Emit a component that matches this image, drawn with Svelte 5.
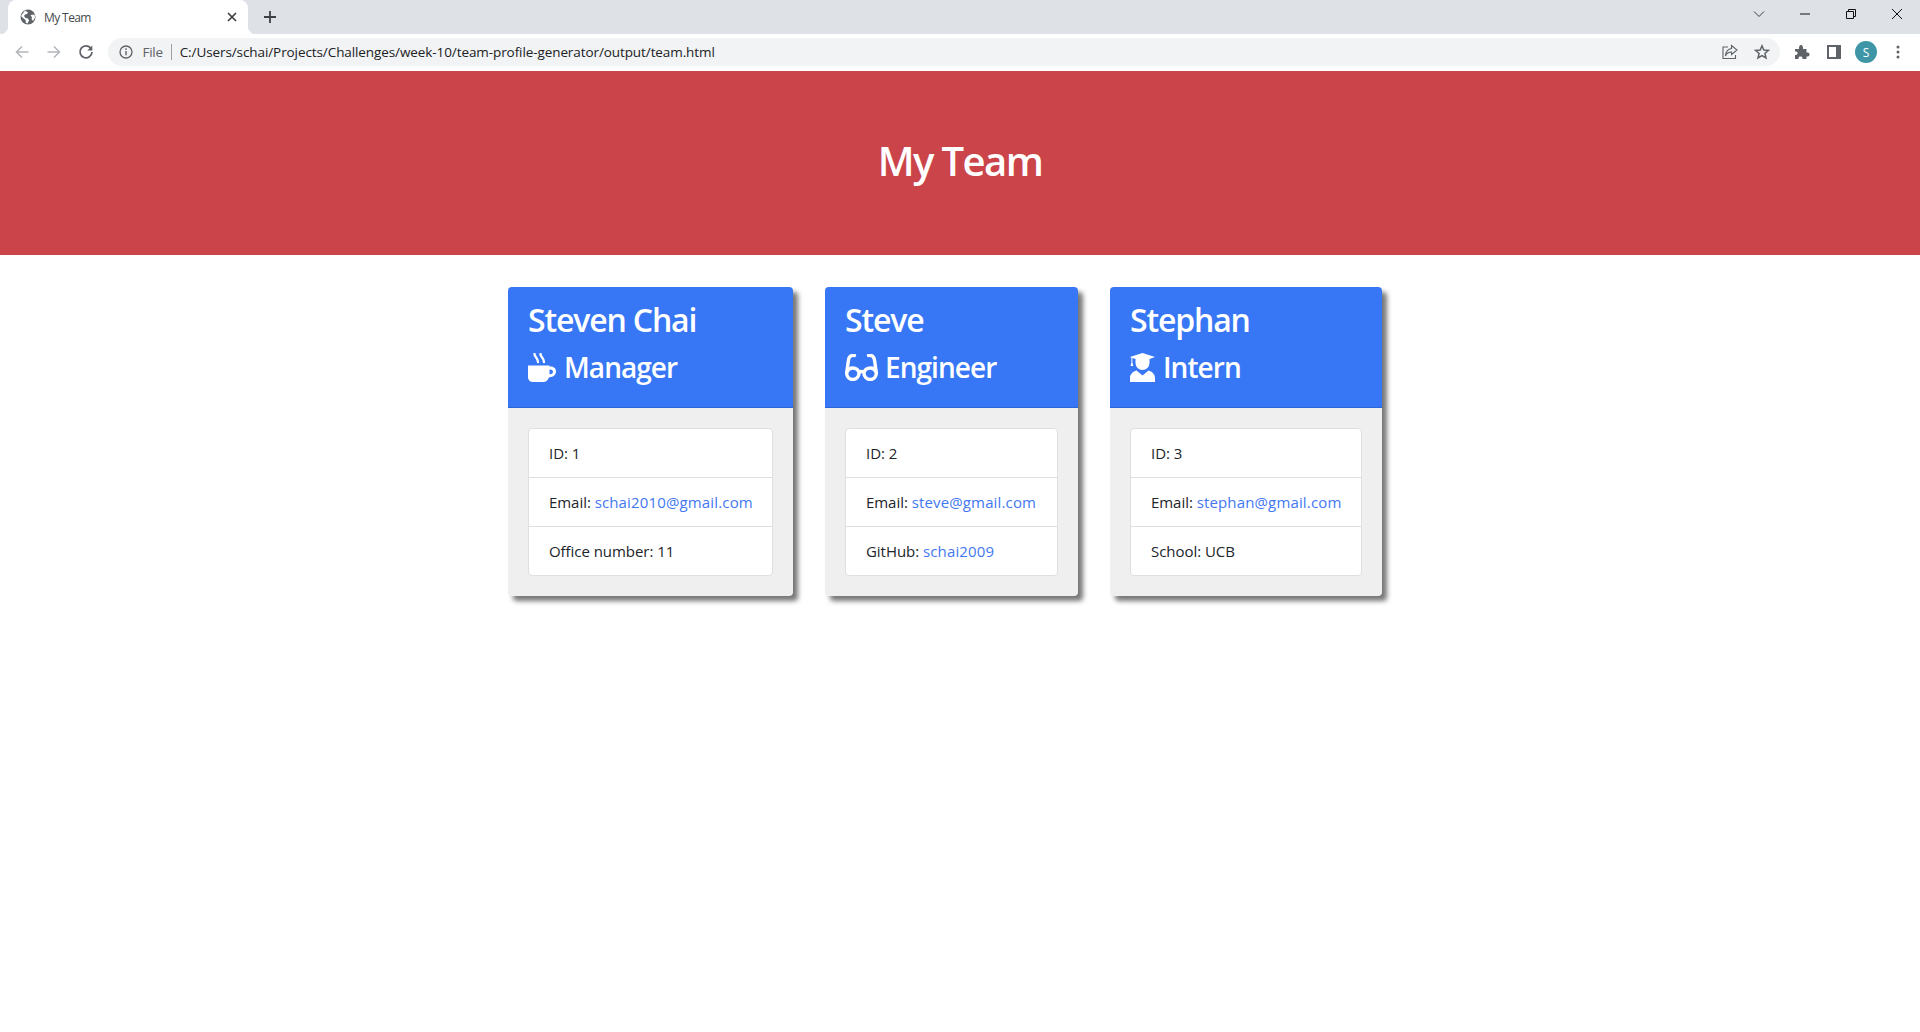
<script lang="ts">
    const team = [
        {
            name: 'Steven Chai',
            role: 'Manager',
            icon: 'mug',
            kind: 'manager',
            id: 1,
            email: 'schai2010@gmail.com',
            extra: 'Office number: 11',
        },
        {
            name: 'Steve',
            role: 'Engineer',
            icon: 'glasses',
            kind: 'engineer',
            id: 2,
            email: 'steve@gmail.com',
            github: 'schai2009',
        },
        {
            name: 'Stephan',
            role: 'Intern',
            icon: 'grad',
            kind: 'intern',
            id: 3,
            email: 'stephan@gmail.com',
            extra: 'School: UCB',
        },
    ];
</script>

<div class="chrome">
    <div class="tabstrip">
        <div class="tab">
            <svg class="favicon" viewBox="0 0 16 16" width="16" height="16">
                <circle cx="8" cy="8" r="7.5" fill="#5f6368" />
                <path d="M5 1.5 8 3.5 7 5 5 5.500 4 7 5.500 9 8 9.500 9 11.500 7.500 14.500 6 14 5.500 11 2.500 8.500 1 7Z M10.500 6 14.500 5.500 15 8.500 13 12 11.500 10 12 8.500Z" fill="#fff" />
            </svg>
            <span class="tab-title">My Team</span>
            <svg class="tab-close" viewBox="0 0 10 10" width="10" height="10">
                <path d="M1 1 9 9M9 1 1 9" stroke="#3c4043" stroke-width="1.700" />
            </svg>
        </div>
        <svg class="new-tab" viewBox="0 0 12 12" width="12" height="12">
            <path d="M6 0v12M0 6h12" stroke="#3c4043" stroke-width="1.800" />
        </svg>
        <div class="window-controls">
            <svg class="chevron" viewBox="0 0 12 8" width="12" height="8">
                <path d="M1 1.500 6 6.500 11 1.500" stroke="#3c4043" stroke-width="1" fill="none" />
            </svg>
            <svg viewBox="0 0 10 2" width="10" height="2">
                <path d="M0 1h10" stroke="#111" stroke-width="1" />
            </svg>
            <svg viewBox="0 0 10 10" width="10" height="10">
                <path d="M2.500 2.500V.5H9.500V7.500H7.500M.5 2.500H7.500V9.500H.5Z" stroke="#111" stroke-width="1" fill="none" />
            </svg>
            <svg viewBox="0 0 10 10" width="10" height="10">
                <path d="M0 0 10 10M10 0 0 10" stroke="#111" stroke-width="1" />
            </svg>
        </div>
    </div>
    <div class="toolbar">
        <svg class="nav" viewBox="0 0 16 16" width="16" height="16">
            <path d="M14.500 8H2.500M8 2.500 2.500 8 8 13.500" stroke="#b4b7bb" stroke-width="1.600" fill="none" />
        </svg>
        <svg class="nav" viewBox="0 0 16 16" width="16" height="16">
            <path d="M1.500 8H13.500M8 2.500 13.500 8 8 13.500" stroke="#b4b7bb" stroke-width="1.600" fill="none" />
        </svg>
        <svg class="nav" viewBox="0 0 16 16" width="16" height="16">
            <path d="M13 4.500A6 6 0 1 0 14 8" stroke="#5f6368" stroke-width="1.700" fill="none" />
            <path d="M14.300 1.500V6.500H9.300Z" fill="#5f6368" />
        </svg>
        <div class="omnibox">
            <svg viewBox="0 0 14 14" width="14" height="14">
                <circle cx="7" cy="7" r="6" stroke="#5f6368" stroke-width="1.300" fill="none" />
                <path d="M7 6v4.200" stroke="#5f6368" stroke-width="1.400" />
                <circle cx="7" cy="4.100" r=".9" fill="#5f6368" />
            </svg>
            <span class="scheme">File</span>
            <span class="divider"></span>
            <span class="url">C:/Users/schai/Projects/Challenges/week-10/team-profile-generator/output/team.html</span>
            <svg class="share" viewBox="0 0 16 16" width="16" height="16">
                <path d="M6 3H1V14.500H13.500V11" stroke="#5f6368" stroke-width="1.100" fill="none" />
                <path d="M9.500 1.500 15 6 9.500 10.500V8C6.500 8 4.500 9.500 3.500 12 3.500 8 6 4.800 9.500 4.500Z" stroke="#5f6368" stroke-width="1.100" fill="none" />
            </svg>
            <svg class="star" viewBox="0 0 16 16" width="16" height="16">
                <path d="M8 1.800 9.800 6 14.400 6.400 10.900 9.400 12 13.900 8 11.500 4 13.900 5.100 9.400 1.600 6.400 6.200 6Z" stroke="#5f6368" stroke-width="1.500" fill="none" />
            </svg>
        </div>
        <div class="toolbar-end">
            <svg viewBox="0 0 16 16" width="16" height="16">
                <path d="M1 5H5C5 2 5.500 1 7 1S9 2 9 5H12.500V8.500C15 8.500 15.500 9 15.500 10.500S15 12.500 12.500 12.500V15H8.500C8.500 13 8 12.500 6.500 12.500S4.500 13 4.500 15H1V11C3 11 3.500 10.500 3.500 9S3 7.500 1 7.500Z" fill="#5f6368" />
            </svg>
            <svg viewBox="0 0 14 14" width="14" height="14">
                <path fill-rule="evenodd" d="M0 0H14V14H0ZM2 2V12H9V2Z" fill="#5f6368" />
            </svg>
            <span class="avatar">S</span>
            <svg viewBox="0 0 4 14" width="4" height="14">
                <circle cx="2" cy="2" r="1.500" fill="#5f6368" />
                <circle cx="2" cy="7" r="1.500" fill="#5f6368" />
                <circle cx="2" cy="12" r="1.500" fill="#5f6368" />
            </svg>
        </div>
    </div>
</div>

<header class="hero">
    <h1>My Team</h1>
</header>

<main class="cards">
    {#each team as member}
        <section class="card {member.kind}">
            <div class="card-header">
                <h2>{member.name}</h2>
                <h3>
                    {#if member.icon === 'mug'}
                        <svg class="mug" viewBox="0 0 28 29" width="28" height="29">
                            <path d="M0 12.500H21.500V13.500C26 13 28 15.500 28 18.500 28 22 25 24.500 21 24.200 20 27 18 29 15.500 29H5C2 29 0 27 0 24.500ZM21.500 16.500V21.200C23.700 21.400 25 20.300 25 18.800 25 17.200 23.700 16.200 21.500 16.500Z" fill="#fff" fill-rule="evenodd" />
                            <path d="M6.500 1C6.500 4 10 5 10 9M12.500 1C12.500 4 16 5 16 9" stroke="#fff" stroke-width="2.400" stroke-linecap="round" fill="none" />
                        </svg>
                    {:else if member.icon === 'glasses'}
                        <svg class="glasses" viewBox="0 0 33 27" width="33" height="27">
                            <path d="M9.500 1.500C6 1 4 3 3.500 6L1.700 18.500C1.500 22.500 4 25.500 7.500 25.500 11.500 25.500 14 22.500 14 19.500 14 16 11 14 7.500 14 5 14 3 15.500 2 18M23.500 1.500C27 1 29 3 29.500 6L31.300 18.500C31.500 22.500 29 25.500 25.500 25.500 21.500 25.500 19 22.500 19 19.500 19 16 22 14 25.500 14 28 14 30 15.500 31 18M14 18.500C15.500 17.300 17.500 17.300 19 18.500" stroke="#fff" stroke-width="3.400" stroke-linecap="round" fill="none" />
                        </svg>
                    {:else}
                        <svg class="grad" viewBox="0 0 25 29" width="25" height="29">
                            <path d="M12.500 0 25 4 19.500 6V10A7 7 0 0 1 5.500 10V6L2.400 5V9.500L3.300 13H.5L1.400 9.500V4.700L0 4Z" fill="#fff" />
                            <path d="M0 29V25C0 21 3 18.500 6.500 17.500L12.500 22.500 18.500 17.500C22 18.500 25 21 25 25V29Z" fill="#fff" />
                        </svg>
                    {/if}
                    <span>{member.role}</span>
                </h3>
            </div>
            <div class="card-body">
                <ul class="list">
                    <li>ID: {member.id}</li>
                    <li>Email: <a href="mailto:{member.email}">{member.email}</a></li>
                    {#if member.github}
                        <li>GitHub: <a href="https://github.com/{member.github}">{member.github}</a></li>
                    {:else}
                        <li>{member.extra}</li>
                    {/if}
                </ul>
            </div>
        </section>
    {/each}
</main>

<style>
    :global(body) {
        margin: 0;
        background: #fff;
        font-family: 'Open Sans', 'Noto Sans', sans-serif;
        color: #212529;
    }

    .chrome {
        height: 71px;
        background: #fff;
        overflow: hidden;
    }

    .tabstrip {
        height: 34px;
        background: #dee1e6;
        display: flex;
        align-items: center;
    }

    .tab {
        position: relative;
        box-sizing: border-box;
        width: 240px;
        height: 34px;
        margin-left: 8px;
        padding: 0 11px 0 12px;
        background: #fff;
        border-radius: 8px 8px 0 0;
        display: flex;
        align-items: center;
    }

    .tab::before,
    .tab::after {
        content: '';
        position: absolute;
        bottom: 0;
        width: 8px;
        height: 8px;
        background: radial-gradient(circle at 0 0, #dee1e6 8px, #fff 8.500px);
    }

    .tab::before {
        left: -8px;
    }

    .tab::after {
        right: -8px;
        transform: scaleX(-1);
    }

    .tab-title {
        margin-left: 8px;
        font-size: 12px;
        letter-spacing: -0.6px;
        color: #45494d;
        flex: 1;
    }

    .new-tab {
        margin-left: 16px;
        flex: none;
    }

    .window-controls {
        margin-left: auto;
        display: flex;
        align-items: center;
        gap: 36px;
        padding: 0 18px 6px 0;
    }

    .chevron {
        margin-right: -1px;
    }

    .toolbar {
        height: 36px;
        display: flex;
        align-items: center;
        padding-left: 14px;
        gap: 16px;
    }

    .nav {
        flex: none;
        margin-right: -0.500px;
    }

    .nav:nth-child(3) {
        margin-left: 1px;
    }

    .omnibox {
        flex: 1;
        height: 28px;
        margin-left: -2px;
        border-radius: 14px;
        background: #f1f3f4;
        display: flex;
        align-items: center;
        padding: 0 10px 0 11px;
    }

    .scheme {
        margin-left: 10px;
        font-size: 13.500px;
        letter-spacing: -0.3px;
        color: #5f6368;
    }

    .divider {
        width: 1px;
        height: 16px;
        margin: 0 8px;
        background: #9aa0a6;
    }

    .url {
        flex: 1;
        font-size: 13.500px;
        letter-spacing: -0.090px;
        color: #202124;
    }

    .star {
        margin-left: 16px;
    }

    .toolbar-end {
        flex: none;
        width: 140px;
        box-sizing: border-box;
        padding: 0 6px;
        display: grid;
        grid-template-columns: repeat(4, 32px);
        justify-items: center;
        align-items: center;
        margin-left: -16px;
    }

    .avatar {
        width: 22px;
        height: 22px;
        border-radius: 50%;
        background: #3d95a5;
        color: #fff;
        font-size: 12px;
        display: flex;
        align-items: center;
        justify-content: center;
    }

    .hero {
        box-sizing: border-box;
        height: 184px;
        background: #cb444a;
        padding: 66px 0 0;
        text-align: center;
    }

    h1 {
        margin: 0;
        font-size: 40px;
        line-height: 48px;
        font-weight: 600;
        color: #fff;
        letter-spacing: -1.600px;
    }

    .cards {
        display: flex;
        justify-content: center;
        padding: 32px 0 40px 2px;
    }

    .card {
        margin-right: 32px;
        background: #efefef;
        border-radius: 4px;
        box-shadow: 5px 5px 5px #777;
    }

    .manager {
        width: 285px;
    }

    .engineer {
        width: 253px;
    }

    .intern {
        width: 272px;
    }

    .card-header {
        box-sizing: border-box;
        height: 121px;
        padding: 14px 20px 0;
        background: #3777f5;
        border-bottom: 1px solid #2c65d6;
        border-radius: 4px 4px 0 0;
        color: #fff;
    }

    h2 {
        margin: 0 0 11px;
        font-size: 32px;
        line-height: 38px;
        font-weight: 600;
        letter-spacing: -1.150px;
    }

    h3 {
        margin: 0;
        font-size: 28px;
        line-height: 34px;
        font-weight: 600;
        letter-spacing: -0.950px;
        display: flex;
        align-items: center;
        gap: 8px;
    }

    .glasses {
        margin-right: -1px;
    }

    .card-body {
        padding: 20px;
    }

    .list {
        margin: 0;
        padding: 0;
        list-style: none;
        background: #fff;
        border: 1px solid #dfdfdf;
        border-radius: 4px;
    }

    .list li {
        box-sizing: border-box;
        height: 49px;
        padding: 12px 20px;
        font-size: 15px;
        line-height: 24px;
        letter-spacing: -0.050px;
        white-space: nowrap;
        border-bottom: 1px solid #dfdfdf;
    }

    .list li:last-child {
        height: 48px;
        border-bottom: 0;
    }

    a {
        color: #4377f2;
        letter-spacing: 0.150px;
        text-decoration: none;
    }
</style>
